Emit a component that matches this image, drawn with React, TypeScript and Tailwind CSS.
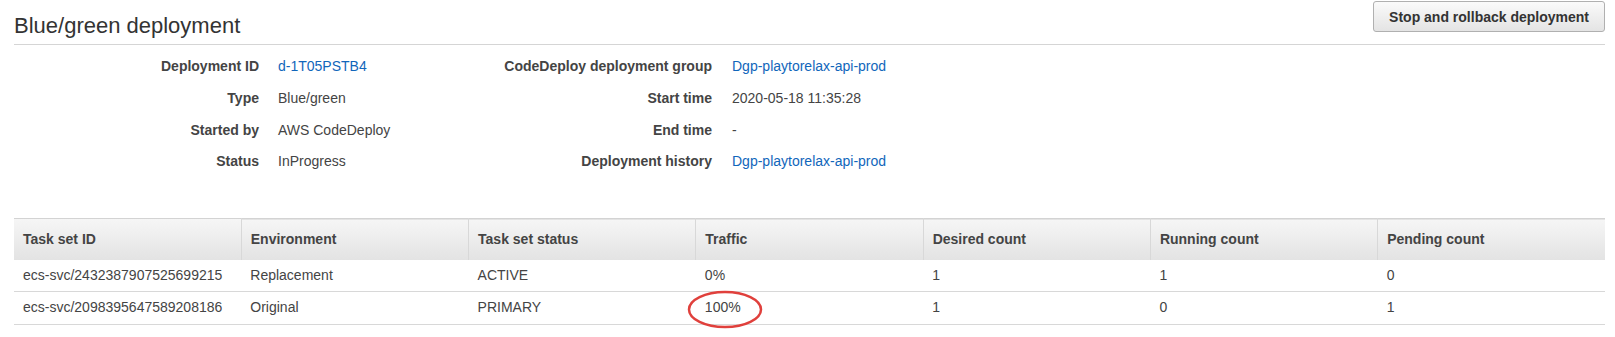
import React from "react";

const details: [string, React.ReactNode, string, React.ReactNode][] = [
  ["Deployment ID", <a className="text-[#1166bb]">d-1T05PSTB4</a>, "CodeDeploy deployment group", <a className="text-[#1166bb]">Dgp-playtorelax-api-prod</a>],
  ["Type", "Blue/green", "Start time", "2020-05-18 11:35:28"],
  ["Started by", "AWS CodeDeploy", "End time", "-"],
  ["Status", "InProgress", "Deployment history", <a className="text-[#1166bb]">Dgp-playtorelax-api-prod</a>],
];

const headers = ["Task set ID", "Environment", "Task set status", "Traffic", "Desired count", "Running count", "Pending count"];
const rows = [
  ["ecs-svc/2432387907525699215", "Replacement", "ACTIVE", "0%", "1", "1", "0"],
  ["ecs-svc/2098395647589208186", "Original", "PRIMARY", "100%", "1", "0", "1"],
];

export default function App() {
  return (
    <div className="w-[1615px] h-[337px] bg-white pl-[14px] pr-[10px] font-['Liberation_Sans',Arial,sans-serif] text-[14px] text-[#444] overflow-hidden">
      <div className="flex justify-between items-start h-[45px] border-b border-[#d5d5d5]">
        <h1 className="text-[22px] leading-none text-[#333] pt-[15px]">Blue/green deployment</h1>
        <button className="mt-[1px] h-[31px] px-[15px] rounded-[3px] border border-[#b0b0b0] bg-gradient-to-b from-[#fafafa] to-[#e4e4e4] text-[14px] font-bold text-[#333] leading-none">
          Stop and rollback deployment
        </button>
      </div>
      <div className="mt-[6px] flex flex-col">
        {details.map(([l1, v1, l2, v2], i) => (
          <div key={i} className="flex items-center h-[31.7px]">
            <div className="w-[245px] text-right font-bold text-[#444]">{l1}</div>
            <div className="w-[219px] pl-[19px] text-[#444]">{v1}</div>
            <div className="w-[234px] text-right font-bold text-[#444]">{l2}</div>
            <div className="pl-[20px] text-[#444]">{v2}</div>
          </div>
        ))}
      </div>
      <table className="mt-[40px] w-[1591px] table-fixed border-collapse">
        <thead>
          <tr className="h-[42px] bg-gradient-to-b from-[#f6f6f6] to-[#e3e3e3] border-t border-[#d3d3d3]">
            {headers.map((h, i) => (
              <th
                key={h}
                className={`text-left font-bold text-[14px] text-[#444] pl-[9px] ${i > 0 ? "border-l border-l-[#d8d8d8]" : ""}`}
              >
                {h}
              </th>
            ))}
          </tr>
        </thead>
        <tbody>
          {rows.map((r, ri) => (
            <tr key={ri} className={`border-b border-[#d8d8d8] ${ri === 0 ? "h-[31px]" : "h-[33px]"}`}>
              {r.map((c, ci) => (
                <td key={ci} className={`pl-[9px] text-[#444] ${ci === 3 && ri === 1 ? "relative" : ""}`}>
                  {c}
                  {ci === 3 && ri === 1 && (
                    <svg className="absolute left-[-9px] top-[-2px]" width="76" height="39" viewBox="0 0 76 39">
                      <ellipse cx="38" cy="19.5" rx="36" ry="17.5" fill="none" stroke="#e0403c" strokeWidth="2.5" />
                    </svg>
                  )}
                </td>
              ))}
            </tr>
          ))}
        </tbody>
      </table>
    </div>
  );
}
